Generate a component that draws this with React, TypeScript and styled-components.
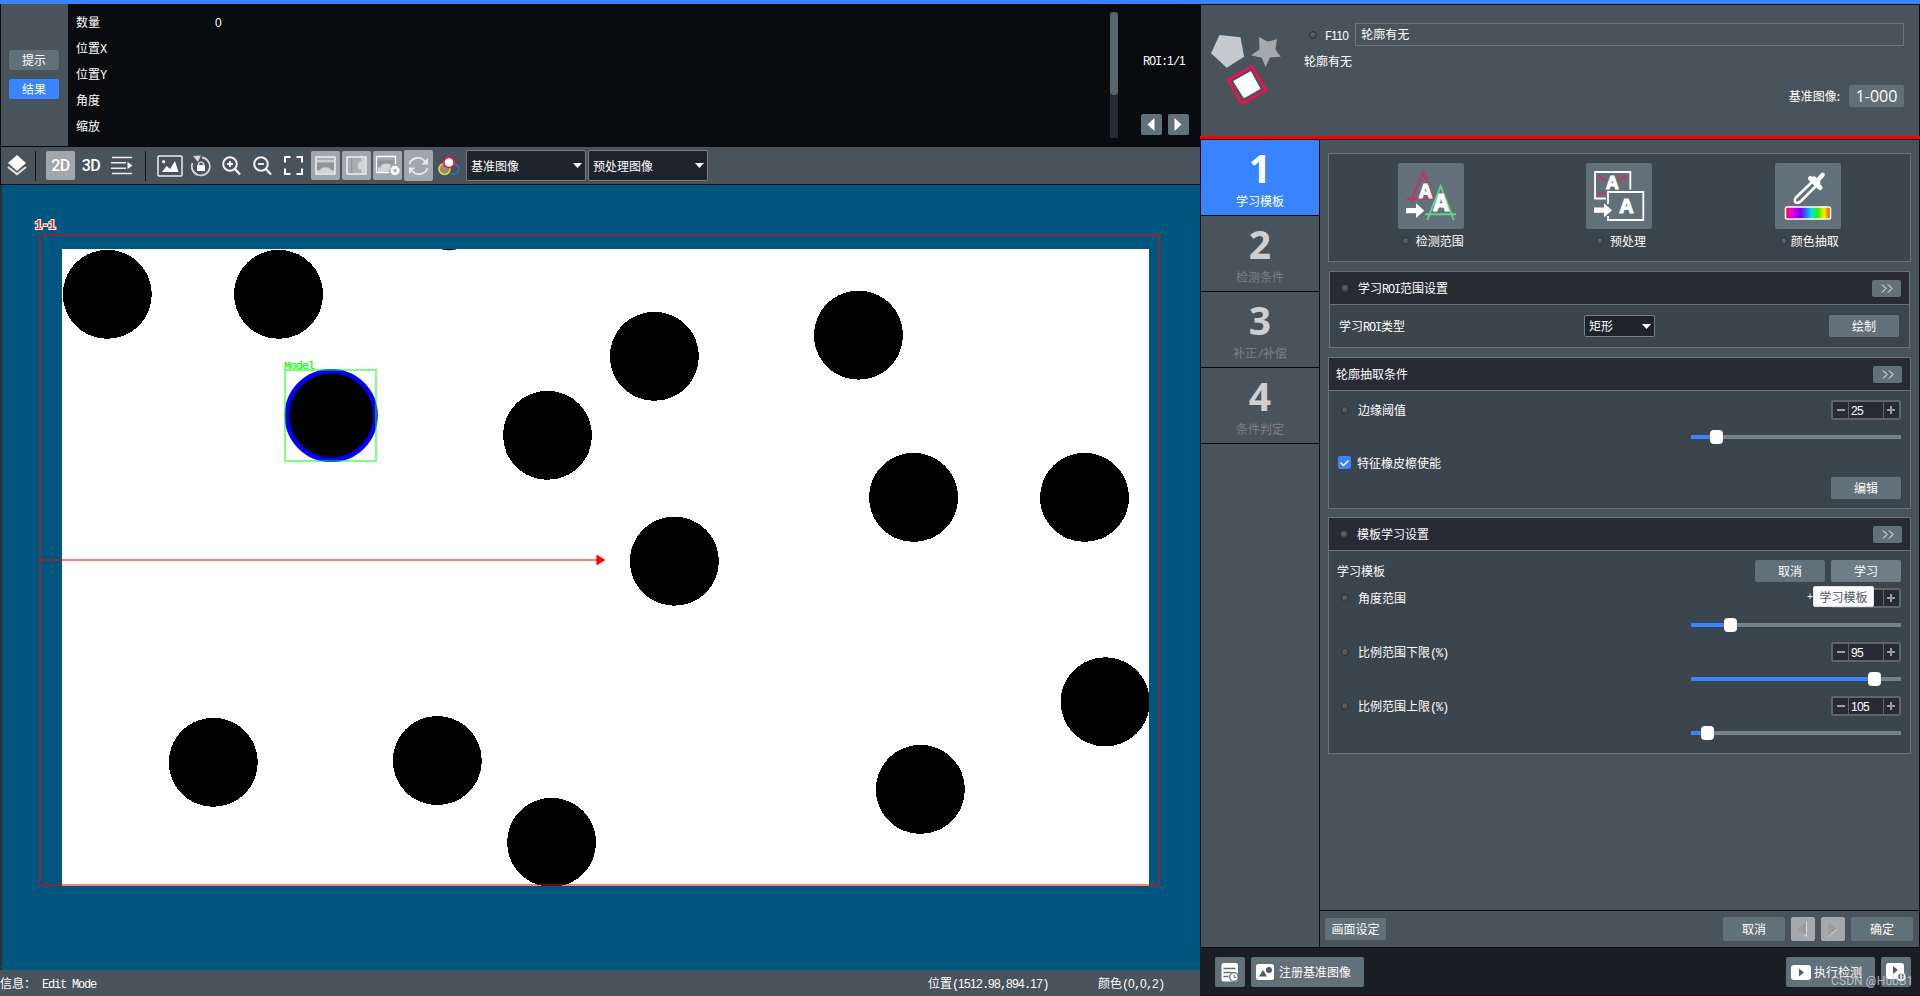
import React from "react";
import styled, { createGlobalStyle, css } from "styled-components";

const c = {
  panel: "#49535b",
  card: "#3b454d",
  header: "#282b34",
  line: "#0a0b0f",
  border: "#69727a",
  button: "#627079",
  blue: "#3983ff",
  field: "#1f232b",
  canvas: "#00567f",
};

const Global = createGlobalStyle`
  * { box-sizing: border-box; }
  body { margin: 0; background: ${c.line}; overflow: hidden; }
`;

/* ---------- text ---------- */
const Text = styled.span<{ $dim?: boolean }>`
  display: inline-block;
  height: 14px;
  line-height: 14px;
  white-space: pre;
  color: ${(p) => (p.$dim ? "#7c7f82" : "inherit")};
`;
const Half = styled.span`
  font-family: "Liberation Mono", monospace;
  letter-spacing: -1.2px;
`;
const Digits = styled.span`
  font-family: "Liberation Sans", sans-serif;
  letter-spacing: -0.67px;
`;

/* Half-width runs are set on a 6px grid beside the 12px full-width characters. */
function T({ children, dim }: { children: string; dim?: boolean }) {
  const parts = children.match(/[0-9]+|[\x20-\x2f\x3a-\x7e]+|[^\x20-\x7e]+/g) ?? [];
  return (
    <Text $dim={dim}>
      {parts.map((s, i) => {
        if (/^[0-9]/.test(s)) return <Digits key={i}>{s}</Digits>;
        return /^[\x20-\x7e]/.test(s) ? <Half key={i}>{s}</Half> : s;
      })}
    </Text>
  );
}

/* ---------- shell ---------- */
const Shell = styled.div`
  width: 1920px;
  height: 996px;
  position: relative;
  display: flex;
  flex-direction: column;
  background: ${c.line};
  color: #fff;
  font: 12px/14px "Noto Sans CJK SC", sans-serif;
`;
const TopStripe = styled.div`
  height: 4px;
  background: ${c.blue};
`;
const Columns = styled.div`
  flex: 1;
  display: flex;
  min-height: 0;
`;
const Left = styled.div`
  width: 1200px;
  display: flex;
  flex-direction: column;
`;
const Right = styled.div`
  width: 720px;
  display: flex;
  flex-direction: column;
`;

/* ---------- result area ---------- */
const Results = styled.div`
  height: 142px;
  display: flex;
  padding-left: 1px;
  background: #090b0e;
`;
const ResultTabs = styled.div`
  width: 67px;
  flex: none;
  background: ${c.panel};
  padding: 46px 9px 0 8px;
  display: flex;
  flex-direction: column;
  gap: 9px;
`;
const Button = styled.button<{ $w: number; $h: number; $bg?: string }>`
  width: ${(p) => p.$w}px;
  height: ${(p) => p.$h}px;
  flex: none;
  padding: 0;
  border: 0;
  border-radius: 2px;
  background: ${(p) => p.$bg ?? c.button};
  color: #fff;
  font: inherit;
  display: flex;
  align-items: center;
  justify-content: center;
`;
const ResultTable = styled.dl`
  margin: 0;
  padding: 5px 0 0 8px;
  width: 1042px;
  flex: none;
`;
const ResultRow = styled.div`
  height: 26px;
  display: grid;
  grid-template-columns: 139px auto;
  align-items: center;
`;
const Scroll = styled.div`
  width: 8px;
  flex: none;
  height: 126px;
  margin-top: 8px;
  background: #262930;
`;
const ScrollThumb = styled.div`
  height: 83px;
  border-radius: 4px;
  background: #56646d;
`;
const RoiBox = styled.div`
  flex: 1;
  padding: 49px 11px 11px 23px;
  display: flex;
  flex-direction: column;
  justify-content: space-between;
`;
const RoiText = styled.div`
  padding-left: 2px;
`;
const RoiButtons = styled.div`
  display: flex;
  gap: 6px;
`;

/* ---------- toolbar ---------- */
const Toolbar = styled.div`
  height: 39px;
  margin-left: 1px;
  border-top: 1px solid ${c.line};
  border-bottom: 1px solid ${c.line};
  background: ${c.panel};
  display: flex;
  align-items: center;
`;
const Tool = styled.span<{ $ml: number; $w: number; $h?: number; $on?: boolean }>`
  margin-left: ${(p) => p.$ml}px;
  width: ${(p) => p.$w}px;
  height: ${(p) => p.$h ?? 29}px;
  flex: none;
  display: flex;
  align-items: center;
  justify-content: center;
  border-radius: 2px;
  font: 500 16px/20px Roboto, sans-serif;
  letter-spacing: -0.6px;
  ${(p) => p.$on && css`background: #a1a7ab;`}
`;
const Divider = styled.span<{ $ml: number }>`
  margin-left: ${(p) => p.$ml}px;
  width: 1px;
  height: 30px;
  background: #10151b;
`;
const SelectBox = styled.div<{ $w: number; $h: number; $ml?: number }>`
  margin-left: ${(p) => p.$ml ?? 0}px;
  width: ${(p) => p.$w}px;
  height: ${(p) => p.$h}px;
  padding: 0 3px 0 4px;
  border: 1px solid #777d83;
  border-radius: 2px;
  background: ${c.field};
  display: flex;
  align-items: center;
  justify-content: space-between;
`;
const Select = ({ label, ...p }: { label: string; $w: number; $h: number; $ml?: number }) => (
  <SelectBox {...p}>
    <T>{label}</T>
    <svg width="9" height="5">
      <path d="M0 0h9L4.5 5z" fill="#fff" />
    </svg>
  </SelectBox>
);

/* ---------- canvas ---------- */
const CanvasWrap = styled.div`
  height: 785px;
  border-left: 2px solid #2a2e36;
  background: ${c.canvas};
`;
const Status = styled.div`
  height: 26px;
  background: ${c.panel};
  display: grid;
  grid-template-columns: 928px 170px auto;
  align-items: center;
`;

const blobs: [number, number][] = [
  [107.3, 294.3], [278.6, 294.3], [654.4, 356.3], [858.5, 335.2], [913.6, 497.4],
  [1084.5, 497.4], [674.4, 561.2], [1105.2, 701.9], [213.3, 762.3], [437.3, 760.6],
  [551.6, 842.4], [920.4, 789.4], [547.5, 435.3],
];

const Canvas = () => (
  <svg width="1198" height="785" viewBox="2 185 1198 785" display="block">
    <defs>
      <clipPath id="frame">
        <rect x="62" y="249" width="1087" height="637" />
      </clipPath>
    </defs>
    <rect x="62" y="249" width="1087" height="637" fill="#fff" />
    <g clipPath="url(#frame)" shapeRendering="crispEdges">
      {blobs.map(([x, y]) => (
        <circle key={`${x},${y}`} cx={x} cy={y} r="44.5" />
      ))}
    </g>
    <ellipse cx="449" cy="249" rx="7.500" ry="1.200" clipPath="url(#frame)" />
    <circle cx="331.200" cy="415.500" r="44.300" stroke="#0000ff" strokeWidth="4.600" />
    <g fill="none" strokeWidth="2">
      <rect x="285" y="370" width="91" height="91" stroke="#00ff00" strokeOpacity=".5" />
      <g stroke="#ff0000" strokeOpacity=".5">
        <rect x="40" y="235" width="1119" height="650" />
        <path d="M40 560H597" />
      </g>
    </g>
    <path d="M596.500 554.500v11l9-5.500z" fill="#f00" />
    <text x="284" y="369" fill="#0f0" fontFamily="Liberation Mono" fontSize="11.500" letterSpacing="-.9" stroke="#0f0" strokeWidth=".25">
      Model
    </text>
    <text x="35" y="229" fill="#f53030" stroke="#fff" strokeWidth="2" paintOrder="stroke" fontFamily="Liberation Mono" fontSize="12" fontWeight="700" letterSpacing="-.4">
      1-1
    </text>
  </svg>
);

/* ---------- right header ---------- */
const Head = styled.div`
  height: 131px;
  margin: 1px 1px 0;
  background: ${c.panel};
  display: flex;
`;
const HeadRule = styled.div`
  height: 3px;
  background: #ff0000;
`;
const HeadInfo = styled.div`
  flex: 1;
  padding: 18px 15px 0 0;
`;
const NameLine = styled.div`
  display: flex;
  align-items: center;
  padding-left: 5px;
`;
const NameField = styled.div`
  flex: 1;
  height: 23px;
  margin-left: 7px;
  border: 1px solid #6c757c;
  padding: 0 5px 1px;
  display: flex;
  align-items: center;
`;
const Kind = styled.div`
  margin: 8px 0 0;
`;
const BaseLine = styled.div`
  margin-top: 17px;
  display: flex;
  align-items: center;
  justify-content: flex-end;
  gap: 9px;
`;
const BaseNo = styled.div`
  width: 55px;
  height: 22px;
  border-radius: 2px;
  background: ${c.button};
  text-align: center;
  font: 16px/23px "Open Sans", sans-serif;
`;
const Led = styled.i<{ $mr?: number }>`
  width: 8px;
  height: 8px;
  flex: none;
  margin-right: ${(p) => p.$mr ?? 9}px;
  border-radius: 50%;
  border: 1px solid #2e3337;
  background: radial-gradient(circle at 35% 35%, #626262, #464646);
`;

/* ---------- steps ---------- */
const Body = styled.div`
  height: 807px;
  margin-top: 1px;
  display: flex;
  padding: 0 1px;
  gap: 1px;
`;
const Steps = styled.div`
  width: 118px;
  background: ${c.panel};
`;
const Step = styled.div<{ $on?: boolean }>`
  height: 76px;
  padding-top: 7px;
  border-bottom: 1px solid ${c.line};
  background: ${(p) => (p.$on ? c.blue : c.panel)};
  color: ${(p) => (p.$on ? "#fff" : "#cfcfd0")};
  text-align: center;
`;
const StepNo = styled.div`
  height: 47px;
  font: 700 39px/42px "Noto Sans", sans-serif;
`;

const Main = styled.div`
  flex: 1;
  display: flex;
  flex-direction: column;
  gap: 1px;
`;
const Scene = styled.div`
  flex: 1;
  padding: 13px 8px 0 8px;
  background: ${c.panel};
`;
const ToolCard = styled.div`
  height: 109px;
  padding: 9px 8px 0;
  border: 1px solid ${c.border};
  background: ${c.card};
  display: flex;
`;
const ToolCell = styled.div`
  flex: 1;
  display: flex;
  flex-direction: column;
  align-items: center;
`;
const BigIcon = styled.div`
  width: 66px;
  height: 66px;
  border-radius: 2px;
  background: ${c.button};
`;
const ToolLabel = styled.div<{ $ml: number }>`
  margin: 5px 0 0 ${(p) => p.$ml}px;
  display: flex;
  align-items: center;
`;

const Card = styled.section<{ $h: number; $mt: number; $inset?: boolean }>`
  height: ${(p) => p.$h}px;
  margin: ${(p) => p.$mt}px ${(p) => (p.$inset ? 1 : 0)}px 0;
  border: 1px solid ${c.border};
  background: ${c.card};
`;
const CardHead = styled.header<{ $pl: number }>`
  height: 33px;
  padding: 0 8px 0 ${(p) => p.$pl}px;
  border-bottom: 1px solid ${c.border};
  background: ${c.header};
  display: flex;
  align-items: center;
`;
const Grow = styled.span`
  flex: 1;
`;
const Row = styled.div<{ $mt: number; $h: number; $pl?: number; $pr?: number }>`
  position: relative;
  height: ${(p) => p.$h}px;
  margin-top: ${(p) => p.$mt}px;
  padding: 0 ${(p) => p.$pr ?? 9}px 0 ${(p) => p.$pl ?? 12}px;
  display: flex;
  align-items: center;
`;
const SpinBox = styled.div`
  width: 70px;
  height: 20px;
  padding: 0 1px;
  border: 2px solid #60656b;
  border-radius: 2px;
  background: ${c.header};
  display: grid;
  grid-template-columns: 14px 36px 14px;
  align-items: stretch;
`;
const SpinValue = styled.span`
  padding-left: 2px;
  border: solid #60656b;
  border-width: 0 1px;
  display: flex;
  align-items: center;
`;
const Spin = ({ value }: { value: string }) => (
  <SpinBox>
    <svg width="14" height="16"><path d="M3 8h8" stroke="#9b9ea2" strokeWidth="2" /></svg>
    <SpinValue><T>{value}</T></SpinValue>
    <svg width="14" height="16"><path d="M3 8h8M7 4v8" stroke="#9b9ea2" strokeWidth="2" /></svg>
  </SpinBox>
);
const Track = styled.div`
  width: 210px;
  height: 14px;
  margin: 0 9px 0 auto;
  display: flex;
  align-items: center;
`;
const Fill = styled.div<{ $w?: number }>`
  height: 4px;
  ${(p) => (p.$w === undefined ? "flex: 1;" : `width: ${p.$w}px;`)}
  background: ${(p) => (p.$w === undefined ? "#76828a" : c.blue)};
`;
const Thumb = styled.div`
  width: 13px;
  height: 14px;
  border-radius: 4px;
  background: #fff;
`;
const Slider = ({ at }: { at: number }) => (
  <Track>
    <Fill $w={at} />
    <Thumb />
    <Fill />
  </Track>
);
const Check = styled.span`
  width: 13px;
  height: 13px;
  margin-right: 6px;
  border-radius: 2px;
  background: ${c.blue};
  display: flex;
`;
const Tooltip = styled.div`
  position: absolute;
  right: 36px;
  top: -2px;
  z-index: 2;
  width: 61px;
  height: 21px;
  border: 1px solid #e4e4e4;
  border-radius: 2px;
  background: #fbfbfb;
  color: #55585c;
  display: flex;
  align-items: center;
  justify-content: center;
`;
const Sign = styled.span`
  width: 24px;
  font: 10px/14px "Liberation Mono", monospace;
`;
const PageFoot = styled.div`
  height: 36px;
  padding: 0 6px 0 5px;
  background: ${c.panel};
  display: flex;
  align-items: center;
  gap: 6px;
`;
const Dock = styled.div`
  flex: 1;
  margin-top: 1px;
  padding: 9px 9px 0 15px;
  background: #1a1d24;
  border-bottom: 1px solid #111318;
  display: flex;
  gap: 6px;
`;
const DockButton = styled(Button)<{ $gap: number }>`
  justify-content: flex-start;
  padding-left: 5px;
  gap: ${(p) => p.$gap}px;
`;
const Watermark = styled.div`
  position: absolute;
  left: 1831px;
  top: 974px;
  color: rgba(215, 218, 222, 0.75);
  font: 12px/14px Roboto, sans-serif;
  letter-spacing: 0.1px;
`;

const More = () => (
  <Button $w={29} $h={17}>
    <svg width="12" height="9" fill="none" stroke="#fff">
      <path d="M1 .5l4 4-4 4M7 .5l4 4-4 4" />
    </svg>
  </Button>
);

const Tri = ({ left }: { left?: boolean }) => (
  <svg width="10" height="13">
    <path d={left ? "M7.500 0v13L.5 6.500z" : "M.5 0v13l7-6.500z"} fill="#fff" />
  </svg>
);

/* ---------- drawings ---------- */
const Shapes = () => (
  <svg width="103" height="131" viewBox="1201 5 103 131">
    <path d="M1219.500 35l21 2.300 3.600 19.500-17.400 11L1211 53.300z" fill="#c6cace" />
    <path d="M1259 37l8.500 4.500 9.500-2.300-1.600 10 5.300 7.500-10.700.8-4.500 9.500-3.700-9.300-10.800-2.500 8.500-5.700z" fill="#a3a9ad" />
    <path d="M1251.700 66.500l14.300 23.200-24 14.200-13.800-23.700z" fill="none" stroke="#fa0a50" strokeWidth="2.600" strokeLinejoin="round" />
    <path d="M1250.700 71.700l9.300 17-16 9-10.300-16.400z" fill="#fff" stroke="#fff" strokeLinejoin="round" />
  </svg>
);

const A = ({ x, y, s }: { x: number; y: number; s: number }) => (
  <text x={x} y={y} fontSize={s} fontWeight="700" fontFamily="Noto Sans" textAnchor="middle" fill="#fff" stroke="#fff" strokeWidth=".8">A</text>
);

const RangeIcon = () => (
  <svg width="66" height="66" fill="none" strokeWidth="1.900">
    <path d="M13 38.700L25.300 9l9.700 26.700M8.700 35.700H36" stroke="#dc2860" />
    <path d="M29.300 57l13.400-34 13 34M27 51.300h31" stroke="#5fd584" />
    <A x={27.600} y={35} s={19} />
    <A x={43} y={48.300} s={22.500} />
    <path d="M8 45h10v-4.700l8.300 7.400L18 55v-4.700H8z" fill="#fff" />
  </svg>
);
const PreIcon = () => (
  <svg width="66" height="66" fill="none">
    <g stroke="#fff" strokeWidth="1.800">
      <path d="M44.300 26.500V9H9v26.500h11" />
      <path d="M22 41V29h35.300v28H22v-4" />
    </g>
    <path d="M12.700 12.700l7.600 5.600M33 18l7.300-5.700M12 32.300l5.300-3.600" stroke="#dc2860" strokeWidth="1.900" />
    <A x={26.300} y={26} s={17.500} />
    <A x={40.500} y={49.500} s={20} />
    <path d="M8 44.500h10v-4.300l8 7-8 7v-4.500H8z" fill="#fff" />
  </svg>
);
const PickIcon = () => (
  <svg width="66" height="66" fill="none" stroke="#fff" strokeLinecap="round" strokeLinejoin="round">
    <defs>
      <linearGradient id="hue">
        <stop offset="0" stopColor="#ff0030" />
        <stop offset=".14" stopColor="#f000e0" />
        <stop offset=".34" stopColor="#7000f0" />
        <stop offset=".5" stopColor="#2090ff" />
        <stop offset=".58" stopColor="#00e8e0" />
        <stop offset=".72" stopColor="#30f000" />
        <stop offset=".86" stopColor="#f8f000" />
        <stop offset="1" stopColor="#ff3000" />
      </linearGradient>
    </defs>
    <path d="M47.500 12l-5 5.500" strokeWidth="4.500" />
    <path d="M35.500 15.500L45 24.500M39 16l4 4" strokeWidth="5" />
    <path d="M36 20L20.500 35q-2 5 1.500 4.800 2 .2 4-1.800l14.500-14.500" strokeWidth="2.600" />
    <rect x="10.500" y="44" width="45" height="12" rx="1.500" fill="url(#hue)" strokeWidth="1.600" />
  </svg>
);

const Layers = () => (
  <svg width="20" height="22">
    <path d="M10 0l9 8-9 8-9-8z" fill="#fff" />
    <path d="M1 12l9 7 9-7" fill="none" stroke="#dfe2e4" strokeWidth="2.200" />
  </svg>
);
const Lines = () => (
  <svg width="22" height="19" stroke="#eceeef" strokeWidth="1.600">
    <path d="M1 1.500h20M0 6.700h15M0 12.300h15M1 17.500h20" />
    <path d="M16.500 6l5 3.500-5 3.500z" fill="#fff" stroke="none" />
  </svg>
);
const Picture = () => (
  <svg width="26" height="22">
    <rect x="1" y="1" width="24" height="20" rx="1" fill="none" stroke="#eceeef" strokeWidth="1.500" />
    <path d="M5 17l4.500-6 3.500 3 5-8 3.500 11z" fill="#fff" />
    <circle cx="6.700" cy="6.700" r="1.600" fill="#fff" />
  </svg>
);
const Lock = () => (
  <svg width="22" height="22" fill="none" stroke="#d3d7da" strokeWidth="1.800">
    <path d="M12 2.500a9 9 0 1 1-9.500 5.500" />
    <path d="M3 1l8-.5-3 6.500z" fill="#d3d7da" stroke="none" />
    <rect x="7" y="10" width="8" height="6" fill="#fff" stroke="none" />
    <path d="M8.500 11V8.500q2.500-3 5 0V11" strokeWidth="1.500" />
  </svg>
);
const Lens = ({ plus }: { plus?: boolean }) => (
  <svg width="19" height="20" fill="none" stroke="#f1f2f3" strokeWidth="2">
    <circle cx="8" cy="8" r="6.800" />
    <path d="M13 13l5 5.500" strokeWidth="2.400" />
    <path d={plus ? "M5 8h6M8 5v6" : "M5 8h6"} strokeWidth="1.900" />
  </svg>
);
const Full = () => (
  <svg width="19" height="19" fill="none" stroke="#fff" strokeWidth="2">
    <path d="M6.500 1H1v5.500M12.500 1H18v5.500M1 12.500V18h5.500M18 12.500V18h-5.500" />
  </svg>
);
const PaneA = () => (
  <svg width="21" height="19">
    <rect x="1" y="1" width="19" height="17" fill="#a9aeb2" stroke="#fff" strokeWidth="1.200" />
    <path d="M2 5h17" stroke="#ececec" />
    <path d="M2 7h17v7h-2.500q-.5-3-6-3t-6 3H2z" fill="#8f959a" />
    <path d="M2 17v-2.500h3q1-3 5.500-3t5.500 3h3V17z" fill="#d2d5d7" />
  </svg>
);
const PaneB = () => (
  <svg width="21" height="19">
    <rect x="1" y="1" width="19" height="17" fill="#a9aeb2" stroke="#fff" strokeWidth="1.200" />
    <path d="M5.500 2v15" stroke="#8f959a" strokeWidth="1.500" />
    <path d="M19 2h-3.500v3q-4 1-4 4.500t4 4.500v3H19z" fill="#d2d5d7" />
  </svg>
);
const PaneC = () => (
  <svg width="25" height="21" fill="none">
    <path d="M14 17.500H1.500V1.500h19V9" stroke="#fff" strokeWidth="1.300" />
    <path d="M2.500 5.500h17v3h-7q-5 0-10 4z" fill="#8f959a" />
    <path d="M3 17v-4.500h2.500q1-4 6-4 3 0 4.500 2.500L13 17z" fill="#d2d5d7" />
    <circle cx="20" cy="15.500" r="3.200" fill="#a1a7ab" stroke="#fff" strokeWidth="3" />
  </svg>
);
const Cycle = () => (
  <svg width="21" height="20" fill="none" stroke="#e6e8e9" strokeWidth="1.800">
    <path d="M1.500 8a8.800 8.800 0 0 1 15.500-2.500M19.500 12A8.800 8.800 0 0 1 4 14.500" />
    <path d="M20 2v6.500h-6.500zM1 18v-6.500h6.500z" fill="#e6e8e9" stroke="none" />
  </svg>
);
const Rings = () => (
  <svg width="22" height="20" fill="none">
    <circle cx="15.500" cy="13" r="5.300" stroke="#2b6fe0" strokeWidth="1.500" />
    <circle cx="6.500" cy="13" r="5.500" fill="#8a8f80" stroke="#f5dc10" strokeWidth="1.500" />
    <circle cx="11" cy="6.500" r="5.200" fill="#fff" stroke="#f5104e" strokeWidth="1.700" />
  </svg>
);

const FadedArrow = ({ left }: { left?: boolean }) => (
  <svg width="10" height="16" fill="none">
    <path d={left ? "M8.500.5v15L0 8z" : "M.5.5v15L9 8z"} fill="#999da0" />
    <path d={left ? "M8.500.5v15L6 13" : "M.5 15.500L9 8"} stroke="#d6d8da" />
  </svg>
);
const LogIcon = () => (
  <svg width="18" height="19">
    <rect x=".5" width="16.500" height="18.500" rx="2" fill="#fff" />
    <path d="M2.500 5.500h12M2.500 9.500h8M2.500 13.500h5" stroke="#627079" strokeWidth="1.600" />
    <circle cx="13" cy="14" r="4.300" fill="#fff" stroke="#627079" strokeWidth="1.300" />
    <path d="M13 11.500v3h2.300" fill="none" stroke="#627079" />
  </svg>
);
const RegIcon = () => (
  <svg width="18" height="16">
    <rect width="18" height="16" rx="2.500" fill="#fff" />
    <path d="M3 12.500l4-6.500 4 6.500z" fill="#4e5b64" />
    <circle cx="13" cy="6" r="3" fill="#4e5b64" />
  </svg>
);
const RunIcon = () => (
  <svg width="20" height="15">
    <rect width="20" height="15" rx="3" fill="#fff" />
    <path d="M8 3.500v8l5-4z" fill="#4e5b64" />
  </svg>
);
const RunOptIcon = () => (
  <svg width="21" height="19">
    <rect width="18" height="16" rx="2.500" fill="#fff" />
    <path d="M7 3v8l5-4z" fill="#4e5b64" />
    <circle cx="15" cy="13.500" r="3.800" fill="#627079" stroke="#fff" strokeWidth="1.700" />
    <path d="M15 11v6" stroke="#fff" strokeWidth="1.400" />
  </svg>
);

const steps = ["学习模板", "检测条件", "补正/补偿", "条件判定"];
const bigTools = [
  { label: "检测范围", icon: <RangeIcon />, gap: 6, ml: 3 },
  { label: "预处理", icon: <PreIcon />, gap: 6, ml: 3 },
  { label: "颜色抽取", icon: <PickIcon />, gap: 3, ml: 3 },
];
const ranges = [
  { label: "比例范围下限(%)", value: "95", at: 177 },
  { label: "比例范围上限(%)", value: "105", at: 10 },
];

export default function App() {
  return (
    <Shell>
      <Global />
      <TopStripe />
      <Columns>
        <Left>
          <Results>
            <ResultTabs>
              <Button $w={50} $h={20}><T>提示</T></Button>
              <Button $w={50} $h={20} $bg={c.blue}><T>结果</T></Button>
            </ResultTabs>
            <ResultTable>
              {["数量", "位置X", "位置Y", "角度", "缩放"].map((k, i) => (
                <ResultRow key={k}>
                  <T>{k}</T>
                  {i === 0 && <T>0</T>}
                </ResultRow>
              ))}
            </ResultTable>
            <Scroll><ScrollThumb /></Scroll>
            <RoiBox>
              <RoiText><T>ROI:1/1</T></RoiText>
              <RoiButtons>
                <Button $w={21} $h={21}><Tri left /></Button>
                <Button $w={21} $h={21}><Tri /></Button>
              </RoiButtons>
            </RoiBox>
          </Results>
          <Toolbar>
            <Tool $ml={6} $w={20}><Layers /></Tool>
            <Divider $ml={8} />
            <Tool $ml={10} $w={29} $on>2D</Tool>
            <Tool $ml={7} $w={18}>3D</Tool>
            <Tool $ml={11} $w={22}><Lines /></Tool>
            <Divider $ml={12} />
            <Tool $ml={11} $w={26}><Picture /></Tool>
            <Tool $ml={7} $w={22}><Lock /></Tool>
            <Tool $ml={10} $w={19}><Lens plus /></Tool>
            <Tool $ml={12} $w={19}><Lens /></Tool>
            <Tool $ml={12} $w={19}><Full /></Tool>
            <Tool $ml={8} $w={29} $on><PaneA /></Tool>
            <Tool $ml={2} $w={29} $on><PaneB /></Tool>
            <Tool $ml={2} $w={29} $on><PaneC /></Tool>
            <Tool $ml={2} $w={29} $h={31} $on><Cycle /></Tool>
            <Tool $ml={5} $w={22}><Rings /></Tool>
            <Select label="基准图像" $w={120} $h={31} $ml={6} />
            <Select label="预处理图像" $w={120} $h={31} $ml={2} />
          </Toolbar>
          <CanvasWrap><Canvas /></CanvasWrap>
          <Status>
            <T>信息： Edit Mode</T>
            <T>位置(1512.98,894.17)</T>
            <T>颜色(0,0,2)</T>
          </Status>
        </Left>

        <Right>
          <Head>
            <Shapes />
            <HeadInfo>
              <NameLine>
                <Led $mr={8} />
                <T>F110</T>
                <NameField><T>轮廓有无</T></NameField>
              </NameLine>
              <Kind><T>轮廓有无</T></Kind>
              <BaseLine>
                <Text>基准图像:</Text>
                <BaseNo>1-000</BaseNo>
              </BaseLine>
            </HeadInfo>
          </Head>
          <HeadRule />
          <Body>
            <Steps>
              {steps.map((s, i) => (
                <Step key={s} $on={i === 0}>
                  <StepNo>{i + 1}</StepNo>
                  <T dim={i > 0}>{s}</T>
                </Step>
              ))}
            </Steps>
            <Main>
              <Scene>
                <ToolCard>
                  {bigTools.map((t) => (
                    <ToolCell key={t.label}>
                      <BigIcon>{t.icon}</BigIcon>
                      <ToolLabel $ml={t.ml}>
                        <Led $mr={t.gap} />
                        <T>{t.label}</T>
                      </ToolLabel>
                    </ToolCell>
                  ))}
                </ToolCard>

                <Card $h={77} $mt={9} $inset>
                  <CardHead $pl={11}>
                    <Led /><T>学习ROI范围设置</T><Grow /><More />
                  </CardHead>
                  <Row $mt={10} $h={22} $pl={9} $pr={10}>
                    <T>学习ROI类型</T>
                    <Grow />
                    <Select label="矩形" $w={71} $h={22} />
                    <Row $mt={0} $h={22} $pl={174} $pr={0}>
                      <Button $w={70} $h={22}><T>绘制</T></Button>
                    </Row>
                  </Row>
                </Card>

                <Card $h={152} $mt={9}>
                  <CardHead $pl={7}>
                    <T>轮廓抽取条件</T><Grow /><More />
                  </CardHead>
                  <Row $mt={9} $h={20}>
                    <Led /><T>边缘阈值</T><Grow /><Spin value="25" />
                  </Row>
                  <Row $mt={10} $h={14} $pl={0} $pr={0}><Slider at={19} /></Row>
                  <Row $mt={12} $h={13} $pl={9}>
                    <Check>
                      <svg width="13" height="13" fill="none" stroke="#fff" strokeWidth="1.500">
                        <path d="M2.500 6.500l3 3 5-5" />
                      </svg>
                    </Check>
                    <T>特征橡皮檫使能</T>
                  </Row>
                  <Row $mt={8} $h={22}><Grow /><Button $w={70} $h={22}><T>编辑</T></Button></Row>
                </Card>

                <Card $h={237} $mt={8}>
                  <CardHead $pl={11}>
                    <Led /><T>模板学习设置</T><Grow /><More />
                  </CardHead>
                  <Row $mt={9} $h={22} $pl={8}>
                    <T>学习模板</T>
                    <Grow />
                    <Button $w={70} $h={22}><T>取消</T></Button>
                    <Row $mt={0} $h={22} $pl={6} $pr={0}>
                      <Button $w={70} $h={22} $bg="#6f7d86"><T>学习</T></Button>
                    </Row>
                  </Row>
                  <Row $mt={6} $h={20}>
                    <Led /><T>角度范围</T>
                    <Grow />
                    <Sign>+</Sign>
                    <Spin value="" />
                    <Tooltip><T>学习模板</T></Tooltip>
                  </Row>
                  <Row $mt={10} $h={14} $pl={0} $pr={0}><Slider at={33} /></Row>
                  {ranges.map((r) => (
                    <React.Fragment key={r.label}>
                      <Row $mt={10} $h={20}>
                        <Led /><T>{r.label}</T><Grow /><Spin value={r.value} />
                      </Row>
                      <Row $mt={10} $h={14} $pl={0} $pr={0}><Slider at={r.at} /></Row>
                    </React.Fragment>
                  ))}
                </Card>
              </Scene>
              <PageFoot>
                <Button $w={61} $h={22}><T>画面设定</T></Button>
                <Grow />
                <Button $w={62} $h={24}><T>取消</T></Button>
                <Button $w={24} $h={24} $bg="#a5a9ac"><FadedArrow left /></Button>
                <Button $w={24} $h={24} $bg="#a5a9ac"><FadedArrow /></Button>
                <Button $w={62} $h={24}><T>确定</T></Button>
              </PageFoot>
            </Main>
          </Body>
          <Dock>
            <Button $w={30} $h={30}><LogIcon /></Button>
            <DockButton $w={113} $h={30} $gap={5}><RegIcon /><T>注册基准图像</T></DockButton>
            <Grow />
            <DockButton $w={89} $h={30} $gap={3}><RunIcon /><T>执行检测</T></DockButton>
            <Button $w={30} $h={30}><RunOptIcon /></Button>
          </Dock>
        </Right>
      </Columns>
      <Watermark>CSDN @HubB1</Watermark>
    </Shell>
  );
}
